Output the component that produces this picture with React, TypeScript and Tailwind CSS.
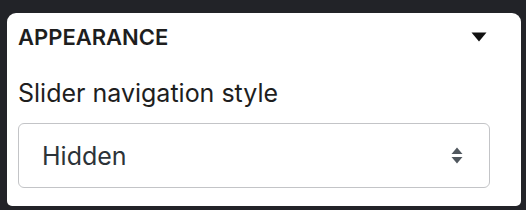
export default function App() {
  return (
    <div className="h-[210px] w-[526px] bg-[#222328] pt-[13px] pl-[7px] font-['Inter','Liberation_Sans',sans-serif]">
      <div className="flex h-[193px] w-[514px] flex-col rounded-t-[9px] rounded-b-[5px] bg-white pl-[11px] pr-[31px]">
        {/* Section header */}
        <div className="flex h-[48px] items-center justify-between">
          <span className="text-[22px] leading-[24px] font-semibold text-[#1e1e1e]">APPEARANCE</span>
          <svg className="mr-[3px] h-[10px] w-[16px]" viewBox="0 0 16 10">
            <path d="M0.5 0.5h15L8 9.5z" fill="#111" />
          </svg>
        </div>

        {/* Field */}
        <div className="mt-[18px] text-[25px] leading-[28px] text-[#1e1e1e]">Slider navigation style</div>
        <div className="mt-[16px] flex h-[65px] items-center justify-between rounded-[6px] border border-[#c3c4c7] pl-[23px] pr-[26px]">
          <span className="text-[25px] leading-[28px] text-[#2c3338]">Hidden</span>
          <svg className="h-[17px] w-[12px]" viewBox="0 0 12 17">
            <path d="M6 0.5L11.5 7H0.5z" fill="#50575e" />
            <path d="M0.5 10h11L6 16.5z" fill="#50575e" />
          </svg>
        </div>
      </div>
    </div>
  );
}
